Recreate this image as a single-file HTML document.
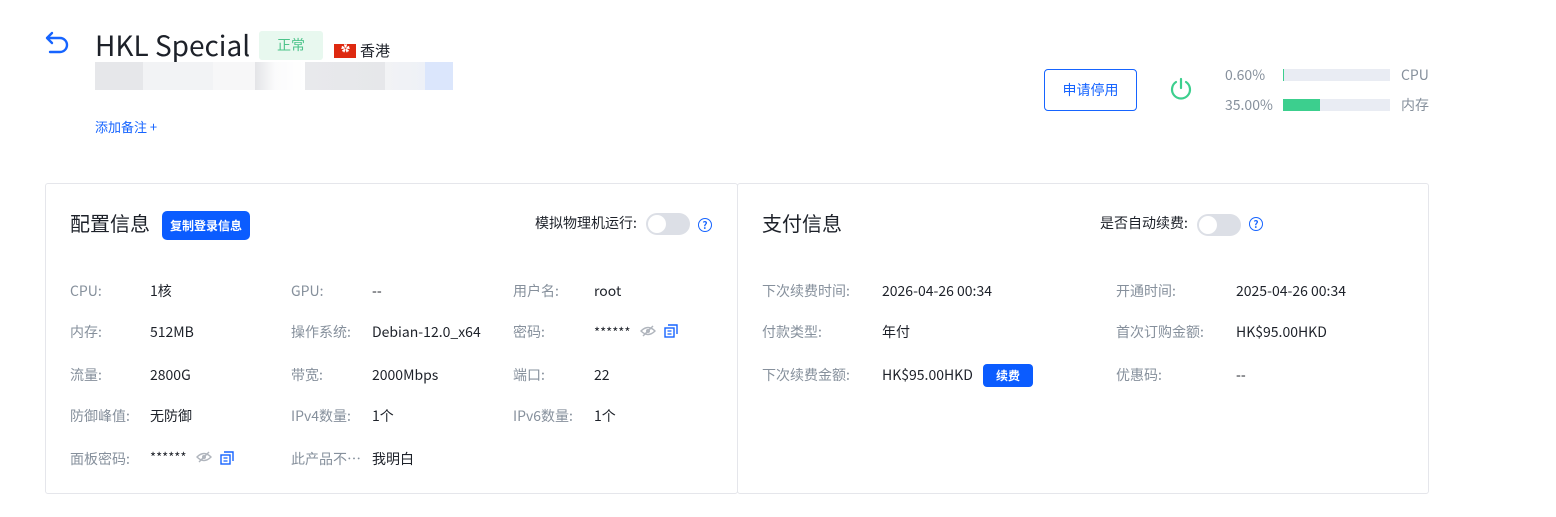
<!DOCTYPE html>
<html><head><meta charset="utf-8"><style>
*{margin:0;padding:0;box-sizing:border-box}
body{width:1556px;height:517px;background:#fff;position:relative;overflow:hidden;font-family:"Noto Sans CJK SC","Liberation Sans",sans-serif;color:#1d2129}
.a{position:absolute;white-space:nowrap}
.l{font-size:14px;color:#86909c;line-height:20px}
.v{font-size:14px;color:#1d2129;line-height:20px}
.card{position:absolute;border:1px solid #e5e6eb;border-radius:3px;background:#fff}
.tg{position:absolute;width:44px;height:22px;border-radius:11px;background:#dcdfe6}
.tg::after{content:"";position:absolute;left:2px;top:2px;width:18px;height:18px;border-radius:50%;background:#fff}
.q{position:absolute;width:14px;height:14px;border:1.3px solid #1664ff;border-radius:50%;color:#1664ff;font-size:10px;line-height:11px;text-align:center;font-weight:bold}
</style></head><body>
<svg class="a" style="left:44px;top:30px" width="28" height="26" viewBox="0 0 28 26"><path d="M8 3 L3 8 L8 13 M3 8 H16 a7 7 0 0 1 0 14 H6" fill="none" stroke="#1664ff" stroke-width="2.4" stroke-linecap="round" stroke-linejoin="round"/></svg>
<div class="a" style="left:95px;top:25px;font-size:28px;line-height:40px;color:#1d2129">HKL Special</div>
<div class="a" style="left:259px;top:31px;width:64px;height:29px;background:#e8f8ef;border-radius:3px;color:#4cc38a;font-size:14px;line-height:29px;text-align:center">正常</div>
<div class="a" style="left:334px;top:44px;width:22px;height:14px;background:#de2910"><span style="position:absolute;left:7px;top:-2px;color:#fff;font-size:9px">✿</span></div>
<div class="a v" style="left:360px;top:41px;font-size:15px">香港</div>
<div class="a" style="left:95px;top:62px;width:358px;height:28px;background:linear-gradient(90deg,#e6e7ea 0,#e6e7ea 48px,#f2f3f5 48px,#f2f3f5 118px,#f7f7f8 118px,#f7f7f8 160px,#e3e4e7 160px,#fbfbfc 180px,#fff 210px,#e8e9ec 210px,#e6e7ea 290px,#f2f3f5 290px,#eef1f7 330px,#dbe6fc 330px,#dbe6fc 358px)"></div>
<div class="a" style="left:95px;top:117px;font-size:13px;color:#1664ff;line-height:20px">添加备注 +</div>
<div class="a" style="left:1044px;top:69px;width:93px;height:42px;border:1px solid #1664ff;border-radius:4px;color:#1664ff;font-size:14px;line-height:40px;text-align:center">申请停用</div>
<svg class="a" style="left:1169px;top:76px" width="24" height="26" viewBox="0 0 24 26"><path d="M7 6 A9 9 0 1 0 17 6" fill="none" stroke="#3ccf8e" stroke-width="2.2" stroke-linecap="round"/><path d="M12 3 V12" stroke="#3ccf8e" stroke-width="2.2" stroke-linecap="round"/></svg>
<div class="a l" style="left:1225px;top:65px">0.60%</div>
<div class="a" style="left:1283px;top:69px;width:107px;height:12px;background:#e9ecf3"><div style="width:1px;height:12px;background:#3ccf8e"></div></div>
<div class="a l" style="left:1401px;top:65px">CPU</div>
<div class="a l" style="left:1225px;top:95px">35.00%</div>
<div class="a" style="left:1283px;top:99px;width:107px;height:12px;background:#e9ecf3"><div style="width:37px;height:12px;background:#3ccf8e"></div></div>
<div class="a l" style="left:1401px;top:95px">内存</div>

<div class="card" style="left:45px;top:183px;width:693px;height:311px"></div>
<div class="card" style="left:737px;top:183px;width:692px;height:311px"></div>

<div class="a" style="left:70px;top:209px;font-size:20px;line-height:28px">配置信息</div>
<div class="a" style="left:162px;top:211px;width:88px;height:29px;background:#0b5cff;border-radius:5px;color:#fff;font-size:12px;font-weight:bold;line-height:29px;text-align:center">复制登录信息</div>
<div class="a v" style="left:535px;top:213px">模拟物理机运行:</div>
<div class="tg" style="left:646px;top:213px"></div>
<div class="q" style="left:698px;top:218px">?</div>

<div class="a" style="left:762px;top:209px;font-size:20px;line-height:28px">支付信息</div>
<div class="a v" style="left:1100px;top:213px">是否自动续费:</div>
<div class="tg" style="left:1197px;top:214px"></div>
<div class="q" style="left:1249px;top:217px">?</div>

<div class="a l" style="left:70px;top:281px">CPU:</div><div class="a v" style="left:150px;top:281px">1核</div>
<div class="a l" style="left:291px;top:281px">GPU:</div><div class="a v" style="left:372px;top:281px">--</div>
<div class="a l" style="left:513px;top:281px">用户名:</div><div class="a v" style="left:594px;top:281px">root</div>

<div class="a l" style="left:70px;top:322px">内存:</div><div class="a v" style="left:150px;top:322px">512MB</div>
<div class="a l" style="left:291px;top:322px">操作系统:</div><div class="a v" style="left:372px;top:322px">Debian-12.0_x64</div>
<div class="a l" style="left:513px;top:322px">密码:</div><div class="a v" style="left:594px;top:322px;font-size:13px">******</div>
<svg class="a" style="left:640px;top:324px" width="16" height="14" viewBox="0 0 16 14"><path d="M1 7 Q8 0 15 7 Q8 14 1 7Z" fill="none" stroke="#b0b5bd" stroke-width="1.4"/><circle cx="8" cy="7" r="2" fill="#b0b5bd"/><path d="M3 12 L13 2" stroke="#b0b5bd" stroke-width="1.4"/></svg>
<svg class="a" style="left:664px;top:324px" width="14" height="14" viewBox="0 0 14 14"><rect x="1" y="4" width="9" height="9" fill="none" stroke="#1664ff" stroke-width="1.4"/><path d="M4 1 H13 V10" fill="none" stroke="#1664ff" stroke-width="1.4"/><path d="M3.5 7 H7.5 M3.5 10 H7.5" stroke="#1664ff" stroke-width="1.2"/></svg>

<div class="a l" style="left:70px;top:365px">流量:</div><div class="a v" style="left:150px;top:365px">2800G</div>
<div class="a l" style="left:291px;top:365px">带宽:</div><div class="a v" style="left:372px;top:365px">2000Mbps</div>
<div class="a l" style="left:513px;top:365px">端口:</div><div class="a v" style="left:594px;top:365px">22</div>

<div class="a l" style="left:70px;top:406px">防御峰值:</div><div class="a v" style="left:150px;top:406px">无防御</div>
<div class="a l" style="left:291px;top:406px">IPv4数量:</div><div class="a v" style="left:372px;top:406px">1个</div>
<div class="a l" style="left:513px;top:406px">IPv6数量:</div><div class="a v" style="left:594px;top:406px">1个</div>

<div class="a l" style="left:70px;top:449px">面板密码:</div><div class="a v" style="left:150px;top:447px;font-size:13px">******</div>
<svg class="a" style="left:196px;top:450px" width="16" height="14" viewBox="0 0 16 14"><path d="M1 7 Q8 0 15 7 Q8 14 1 7Z" fill="none" stroke="#b0b5bd" stroke-width="1.4"/><circle cx="8" cy="7" r="2" fill="#b0b5bd"/><path d="M3 12 L13 2" stroke="#b0b5bd" stroke-width="1.4"/></svg>
<svg class="a" style="left:220px;top:451px" width="14" height="14" viewBox="0 0 14 14"><rect x="1" y="4" width="9" height="9" fill="none" stroke="#1664ff" stroke-width="1.4"/><path d="M4 1 H13 V10" fill="none" stroke="#1664ff" stroke-width="1.4"/><path d="M3.5 7 H7.5 M3.5 10 H7.5" stroke="#1664ff" stroke-width="1.2"/></svg>
<div class="a l" style="left:291px;top:449px">此产品不…</div><div class="a v" style="left:372px;top:449px">我明白</div>

<div class="a l" style="left:762px;top:281px">下次续费时间:</div><div class="a v" style="left:882px;top:281px">2026-04-26 00:34</div>
<div class="a l" style="left:1116px;top:281px">开通时间:</div><div class="a v" style="left:1236px;top:281px">2025-04-26 00:34</div>
<div class="a l" style="left:762px;top:322px">付款类型:</div><div class="a v" style="left:882px;top:322px">年付</div>
<div class="a l" style="left:1116px;top:322px">首次订购金额:</div><div class="a v" style="left:1236px;top:322px">HK$95.00HKD</div>
<div class="a l" style="left:762px;top:365px">下次续费金额:</div><div class="a v" style="left:882px;top:365px">HK$95.00HKD</div>
<div class="a" style="left:983px;top:364px;width:50px;height:23px;background:#0b5cff;border-radius:4px;color:#fff;font-size:12px;font-weight:bold;line-height:23px;text-align:center">续费</div>
<div class="a l" style="left:1116px;top:365px">优惠码:</div><div class="a v" style="left:1236px;top:365px">--</div>
</body></html>
